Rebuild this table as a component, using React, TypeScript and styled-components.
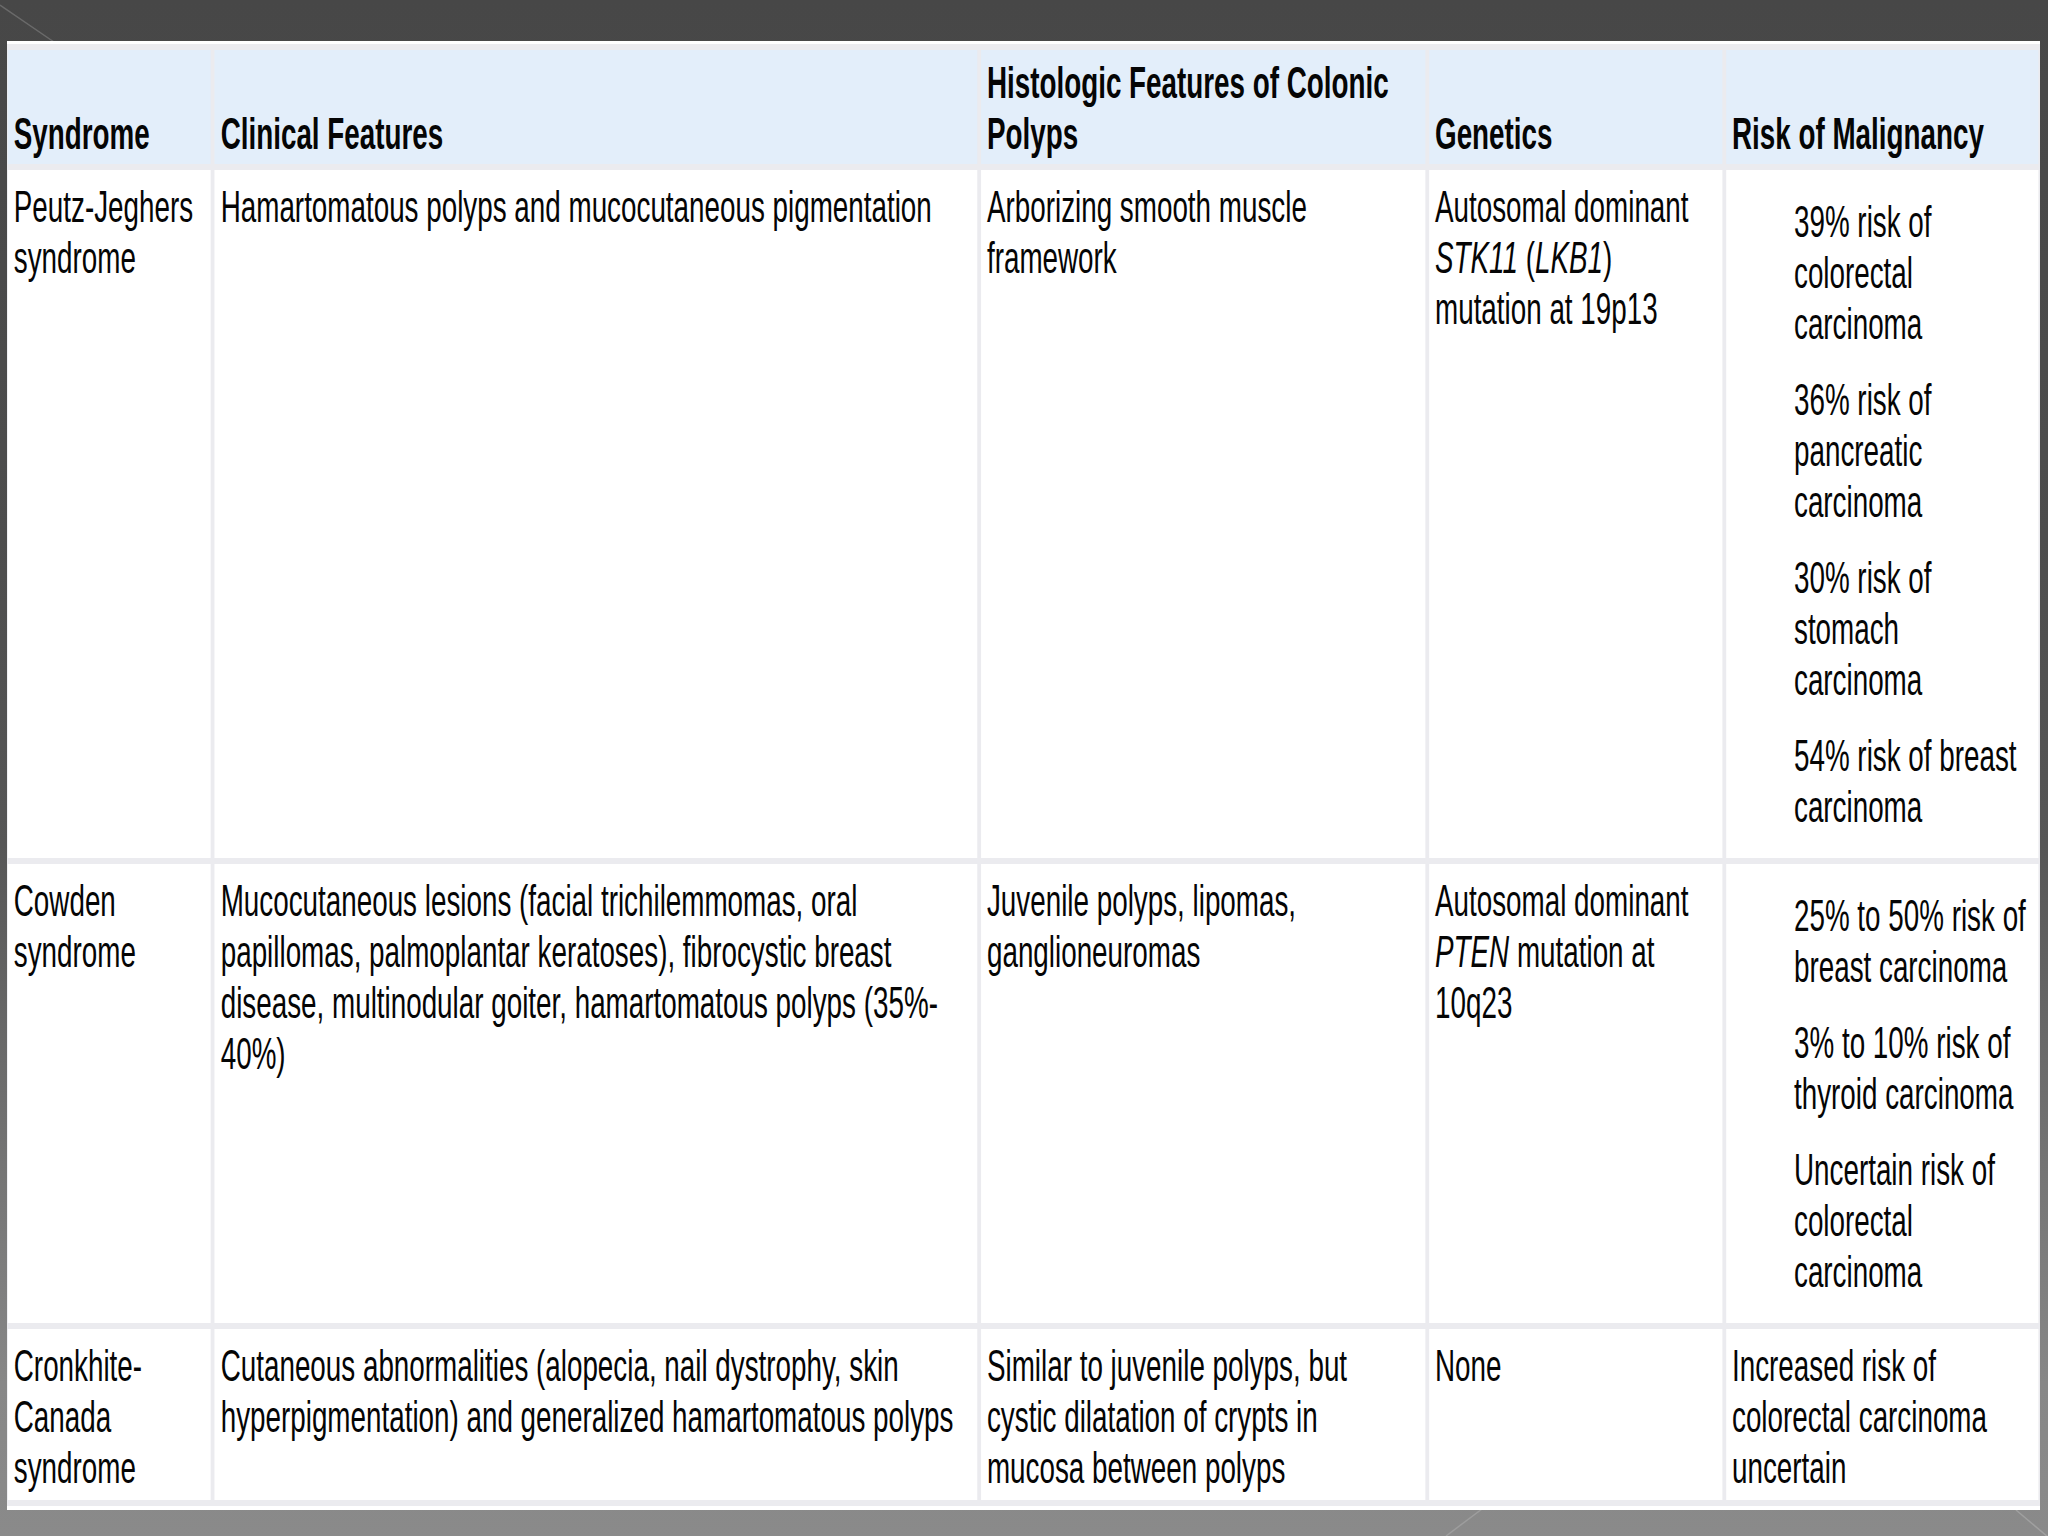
import styled, { createGlobalStyle } from 'styled-components';

// the source table is a horizontally squeezed picture of an Arial table,
// so it is laid out wide and pressed together with scaleX
const SQUEEZE = 0.632;
const wide = (shown: number) => `${(shown / SQUEEZE).toFixed(2)}px`;

const GlobalStyle = createGlobalStyle`
  html, body {
    margin: 0;
    padding: 0;
  }
  body {
    background: #474747;
    overflow: hidden;
  }
`;

const Slide = styled.div`
  position: relative;
  width: 2048px;
  height: 1536px;
  box-sizing: border-box;
  overflow: hidden;
  padding: 41px 0 0 7px;
  background: linear-gradient(
    to bottom,
    #474747 0%,
    #4d4d4d 35%,
    #565656 55%,
    #737373 75%,
    #878787 90%,
    #8a8a8a 100%
  );
`;

const Decor = styled.svg`
  position: absolute;
  left: 0;
  top: 0;
  pointer-events: none;
`;

const Frame = styled.div`
  position: relative;
  width: 2033px;
  padding: 3px 0 4px;
  background: #ffffff;
  overflow: hidden;
`;

const Table = styled.table`
  width: ${wide(2038)};
  margin-left: -3px;
  table-layout: fixed;
  border-collapse: separate;
  border-spacing: ${wide(4)} 6px;
  background: #ebebef;
  transform: scaleX(${SQUEEZE});
  transform-origin: 0 0;
  font-family: "Liberation Sans", Arial, sans-serif;
  font-size: 44px;
  line-height: 51px;
  color: #050505;
`;

const Col = styled.col<{ $w: number }>`
  width: ${(p) => wide(p.$w)};
`;

const Row = styled.tr<{ $h: number }>`
  height: ${(p) => p.$h}px;
`;

const HeadCell = styled.th`
  background: #e3eefa;
  font-weight: bold;
  text-align: left;
  vertical-align: bottom;
  white-space: nowrap;
  padding: 0 ${wide(3)} 5px ${wide(6)};
`;

const Cell = styled.td`
  background: #ffffff;
  text-align: left;
  vertical-align: top;
  white-space: nowrap;
  padding: 11px ${wide(3)} 0 ${wide(6)};
`;

const RiskList = styled.ul`
  list-style: none;
  margin: 15px 0 0;
  padding: 0 0 0 ${wide(62)};
`;

const RiskItem = styled.li`
  & + & {
    margin-top: 25px;
  }
`;

const App = () => {
  return (
    <>
      <GlobalStyle />
      <Slide>
        <Decor width="2048" height="1536" viewBox="0 0 2048 1536">
          <line x1="0" y1="5" x2="54" y2="42" stroke="#6a6a6a" strokeWidth="1.5" />
          <line x1="1446" y1="1536" x2="1482" y2="1509" stroke="#9d9d9d" strokeWidth="1.5" />
          <line x1="2016" y1="1510" x2="2048" y2="1537" stroke="#a0a0a0" strokeWidth="1.5" />
        </Decor>
        <Frame>
          <Table>
            <colgroup>
              <Col $w={203} />
              <Col $w={762} />
              <Col $w={444} />
              <Col $w={293} />
              <Col $w={312} />
            </colgroup>
            <thead>
              <Row $h={114}>
                <HeadCell>Syndrome</HeadCell>
                <HeadCell>Clinical Features</HeadCell>
                <HeadCell>
                  Histologic Features of Colonic
                  <br />
                  Polyps
                </HeadCell>
                <HeadCell>Genetics</HeadCell>
                <HeadCell>Risk of Malignancy</HeadCell>
              </Row>
            </thead>
            <tbody>
              <Row $h={688}>
                <Cell>
                  Peutz-Jeghers
                  <br />
                  syndrome
                </Cell>
                <Cell>Hamartomatous polyps and mucocutaneous pigmentation</Cell>
                <Cell>
                  Arborizing smooth muscle
                  <br />
                  framework
                </Cell>
                <Cell>
                  Autosomal dominant
                  <br />
                  <i>STK11</i> (<i>LKB1</i>)
                  <br />
                  mutation at 19p13
                </Cell>
                <Cell>
                  <RiskList>
                    <RiskItem>
                      39% risk of
                      <br />
                      colorectal
                      <br />
                      carcinoma
                    </RiskItem>
                    <RiskItem>
                      36% risk of
                      <br />
                      pancreatic
                      <br />
                      carcinoma
                    </RiskItem>
                    <RiskItem>
                      30% risk of
                      <br />
                      stomach
                      <br />
                      carcinoma
                    </RiskItem>
                    <RiskItem>
                      54% risk of breast
                      <br />
                      carcinoma
                    </RiskItem>
                  </RiskList>
                </Cell>
              </Row>
              <Row $h={459}>
                <Cell>
                  Cowden
                  <br />
                  syndrome
                </Cell>
                <Cell>
                  Mucocutaneous lesions (facial trichilemmomas, oral
                  <br />
                  papillomas, palmoplantar keratoses), fibrocystic breast
                  <br />
                  disease, multinodular goiter, hamartomatous polyps (35%-
                  <br />
                  40%)
                </Cell>
                <Cell>
                  Juvenile polyps, lipomas,
                  <br />
                  ganglioneuromas
                </Cell>
                <Cell>
                  Autosomal dominant
                  <br />
                  <i>PTEN</i> mutation at
                  <br />
                  10q23
                </Cell>
                <Cell>
                  <RiskList>
                    <RiskItem>
                      25% to 50% risk of
                      <br />
                      breast carcinoma
                    </RiskItem>
                    <RiskItem>
                      3% to 10% risk of
                      <br />
                      thyroid carcinoma
                    </RiskItem>
                    <RiskItem>
                      Uncertain risk of
                      <br />
                      colorectal
                      <br />
                      carcinoma
                    </RiskItem>
                  </RiskList>
                </Cell>
              </Row>
              <Row $h={171}>
                <Cell>
                  Cronkhite-
                  <br />
                  Canada
                  <br />
                  syndrome
                </Cell>
                <Cell>
                  Cutaneous abnormalities (alopecia, nail dystrophy, skin
                  <br />
                  hyperpigmentation) and generalized hamartomatous polyps
                </Cell>
                <Cell>
                  Similar to juvenile polyps, but
                  <br />
                  cystic dilatation of crypts in
                  <br />
                  mucosa between polyps
                </Cell>
                <Cell>None</Cell>
                <Cell>
                  Increased risk of
                  <br />
                  colorectal carcinoma
                  <br />
                  uncertain
                </Cell>
              </Row>
            </tbody>
          </Table>
        </Frame>
      </Slide>
    </>
  );
};

export default App;
